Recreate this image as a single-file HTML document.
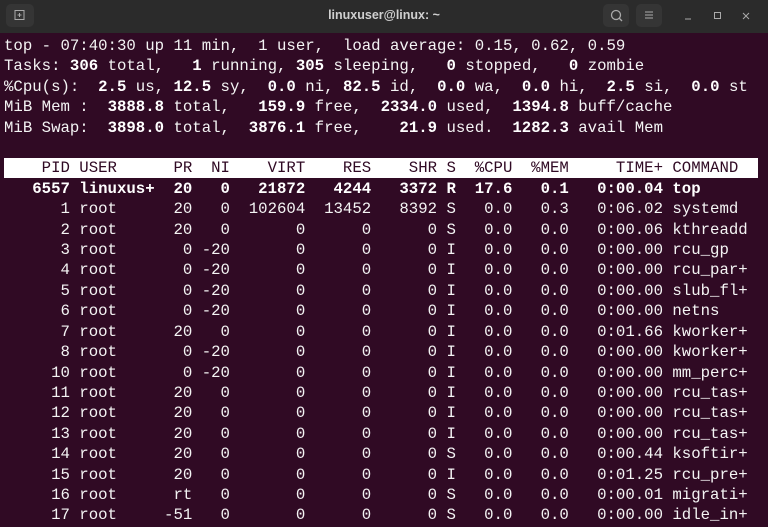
<!DOCTYPE html>
<html><head><style>
html,body{margin:0;padding:0;width:768px;height:527px;overflow:hidden;background:#300a24;}
.bar{position:absolute;left:0;top:0;width:768px;height:33px;background:#2b2b2b;}
.btn{position:absolute;top:4px;width:26px;height:23px;background:#353535;border-radius:5px;}
.title{position:absolute;left:0;width:768px;top:8px;text-align:center;color:#d0d0d0;font:bold 12.5px "Liberation Sans",sans-serif;}
pre{position:absolute;left:4px;top:36px;margin:0;font-family:"Liberation Mono",monospace;font-size:15.7px;line-height:20.4px;color:#f4f4f4;white-space:pre;}
.hl{position:absolute;left:4px;top:158px;width:754px;height:20.4px;background:#ffffff;}
.h{color:#300a24;}
b{font-weight:bold;color:#fff;}
</style></head><body>
<div class="bar">
<div class="btn" style="left:6px;width:28px"></div>
<svg style="position:absolute;left:14px;top:9px" width="12" height="13"><rect x="1" y="1.5" width="9" height="9" fill="none" stroke="#aaa" stroke-width="1"/><path d="M5.5 4v4M3.5 6h4" stroke="#aaa"/></svg>
<div class="title">linuxuser@linux: ~</div>
<div class="btn" style="left:603px"></div>
<svg style="position:absolute;left:609px;top:8px" width="16" height="16"><circle cx="7" cy="7" r="4.5" fill="none" stroke="#aaa" stroke-width="1.3"/><path d="M10 10l3 3" stroke="#aaa" stroke-width="1.3"/></svg>
<div class="btn" style="left:636px"></div>
<svg style="position:absolute;left:643px;top:9px" width="12" height="12"><path d="M2 3h8M2 6h8M2 9h8" stroke="#aaa" stroke-width="1"/></svg>
<svg style="position:absolute;left:684px;top:9px" width="80" height="14"><path d="M1 10h6" stroke="#aaa"/><rect x="30.5" y="3.5" width="6" height="6" fill="none" stroke="#aaa"/><path d="M59 4l6 6M65 4l-6 6" stroke="#aaa"/></svg>
</div>
<div class="hl"></div>
<pre>top - 07:40:30 up 11 min,  1 user,  load average: 0.15, 0.62, 0.59
Tasks: <b>306</b> total,   <b>1</b> running, <b>305</b> sleeping,   <b>0</b> stopped,   <b>0</b> zombie
%Cpu(s):  <b>2.5</b> us, <b>12.5</b> sy,  <b>0.0</b> ni, <b>82.5</b> id,  <b>0.0</b> wa,  <b>0.0</b> hi,  <b>2.5</b> si,  <b>0.0</b> st
MiB Mem :  <b>3888.8</b> total,   <b>159.9</b> free,  <b>2334.0</b> used,  <b>1394.8</b> buff/cache
MiB Swap:  <b>3898.0</b> total,  <b>3876.1</b> free,    <b>21.9</b> used.  <b>1282.3</b> avail Mem

<span class="h">    PID USER      PR  NI    VIRT    RES    SHR S  %CPU  %MEM     TIME+ COMMAND</span>
<b>   6557 linuxus+  20   0   21872   4244   3372 R  17.6   0.1   0:00.04 top</b>
      1 root      20   0  102604  13452   8392 S   0.0   0.3   0:06.02 systemd
      2 root      20   0       0      0      0 S   0.0   0.0   0:00.06 kthreadd
      3 root       0 -20       0      0      0 I   0.0   0.0   0:00.00 rcu_gp
      4 root       0 -20       0      0      0 I   0.0   0.0   0:00.00 rcu_par+
      5 root       0 -20       0      0      0 I   0.0   0.0   0:00.00 slub_fl+
      6 root       0 -20       0      0      0 I   0.0   0.0   0:00.00 netns
      7 root      20   0       0      0      0 I   0.0   0.0   0:01.66 kworker+
      8 root       0 -20       0      0      0 I   0.0   0.0   0:00.00 kworker+
     10 root       0 -20       0      0      0 I   0.0   0.0   0:00.00 mm_perc+
     11 root      20   0       0      0      0 I   0.0   0.0   0:00.00 rcu_tas+
     12 root      20   0       0      0      0 I   0.0   0.0   0:00.00 rcu_tas+
     13 root      20   0       0      0      0 I   0.0   0.0   0:00.00 rcu_tas+
     14 root      20   0       0      0      0 S   0.0   0.0   0:00.44 ksoftir+
     15 root      20   0       0      0      0 I   0.0   0.0   0:01.25 rcu_pre+
     16 root      rt   0       0      0      0 S   0.0   0.0   0:00.01 migrati+
     17 root     -51   0       0      0      0 S   0.0   0.0   0:00.00 idle_in+</pre>
</body></html>
